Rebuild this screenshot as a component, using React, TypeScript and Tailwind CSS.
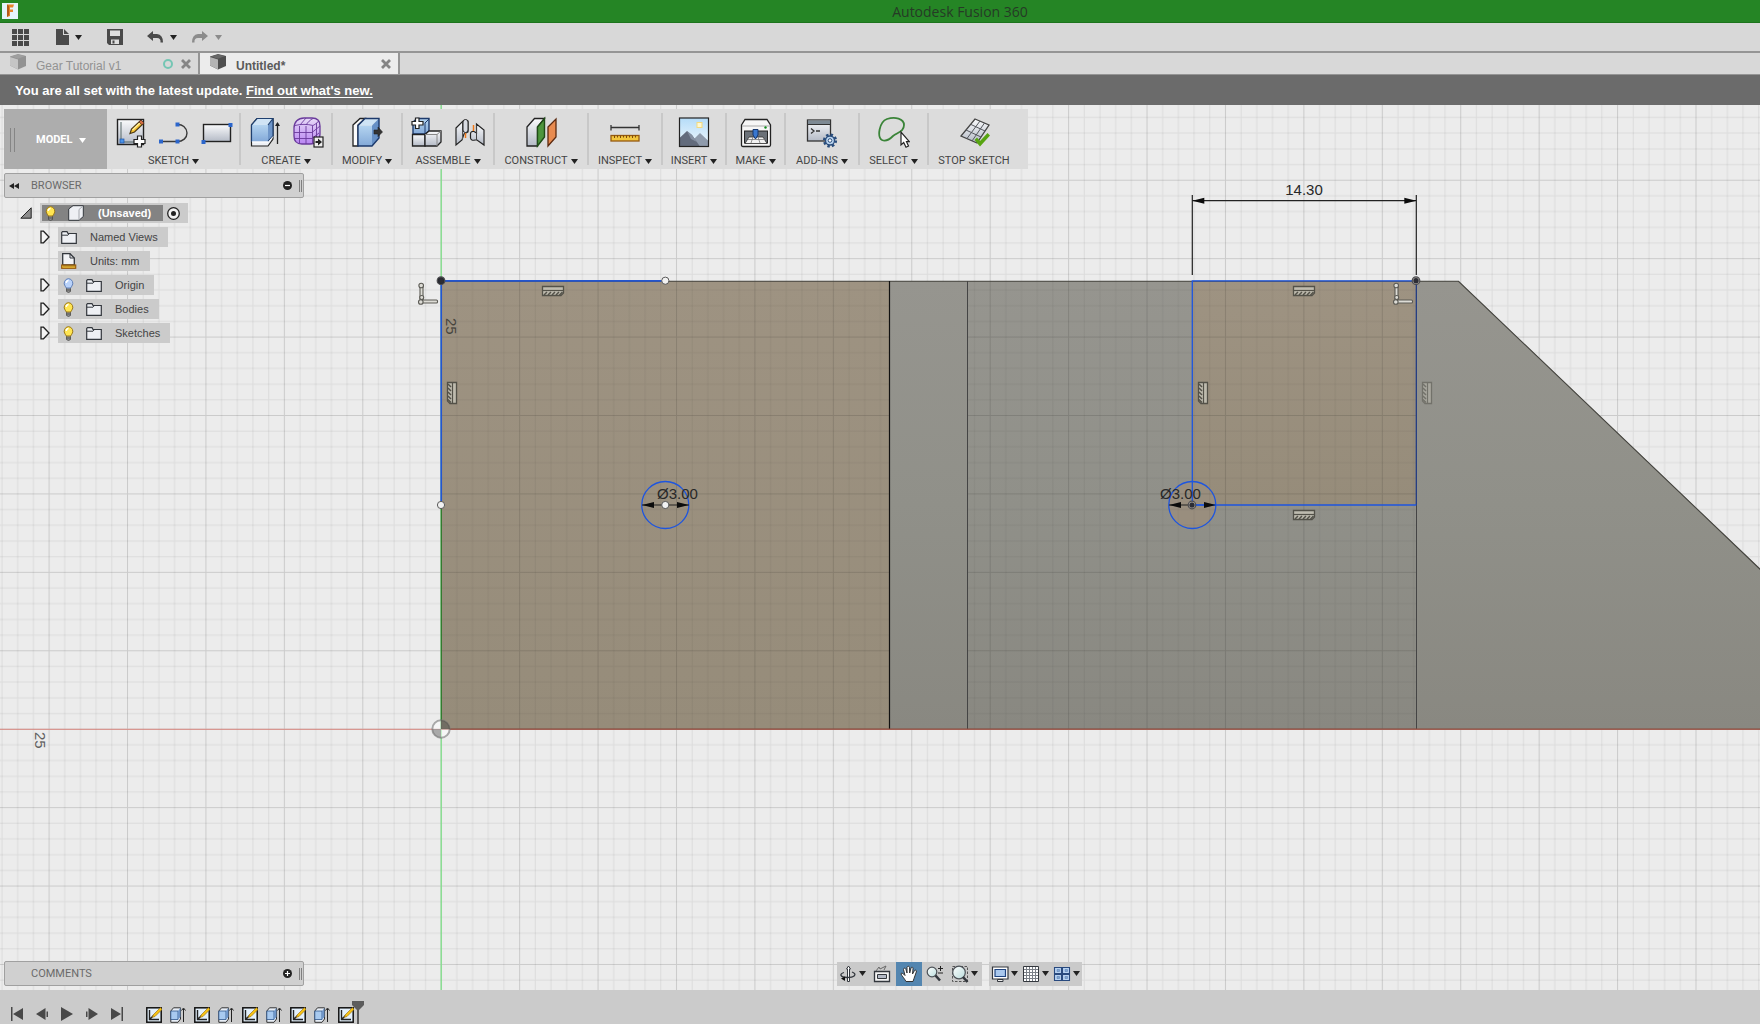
import type { ReactNode } from "react";
import clsx from "clsx";

const OUTLINE = "#33373d";
const BLUE = "#1d55e0";

/* ---------- small shared pieces ---------- */

function Caret({ className }: { className?: string }) {
  return (
    <svg viewBox="0 0 7 5" className={clsx("w-[7px] h-[5px] shrink-0", className)}>
      <path d="M0 0H7L3.5 5Z" fill="currentColor" />
    </svg>
  );
}

function Icon32({ children }: { children: ReactNode }) {
  return <svg viewBox="0 0 32 32" className="w-8 h-8" fill="none">{children}</svg>;
}

function Gradients() {
  return (
    <svg className="absolute w-0 h-0" aria-hidden="true">
      <defs>
        <linearGradient id="steel" x1="0" y1="0" x2="0" y2="1">
          <stop offset="0" stopColor="#fafbfc" />
          <stop offset="1" stopColor="#b4bac6" />
        </linearGradient>
        <linearGradient id="sky" x1="0" y1="0" x2="0" y2="1">
          <stop offset="0" stopColor="#b4d4f0" />
          <stop offset="1" stopColor="#83a9d8" />
        </linearGradient>
        <linearGradient id="violet" x1="0" y1="0" x2="0" y2="1">
          <stop offset="0" stopColor="#e8dcf8" />
          <stop offset="1" stopColor="#b884f2" />
        </linearGradient>
        <linearGradient id="scene" x1="0" y1="0" x2="0" y2="1">
          <stop offset="0" stopColor="#b5dcf8" />
          <stop offset="1" stopColor="#f0f8fd" />
        </linearGradient>
        <linearGradient id="glass" x1="0" y1="0" x2="1" y2="1">
          <stop offset="0" stopColor="#ffffff" />
          <stop offset="1" stopColor="#b9dcdc" />
        </linearGradient>
      </defs>
    </svg>
  );
}

/* ---------- ribbon icons ---------- */

function NewSketchIcon() {
  return (
    <Icon32>
      <rect x="2.5" y="3.5" width="26" height="25" fill="url(#steel)" stroke="#222" strokeWidth="1.4" />
      <path d="M6 6V26H20" stroke="#566" />
      <rect x="5" y="23" width="4" height="4" fill="#4b93e8" stroke="#1d55a8" strokeWidth=".7" />
      <path d="M15 17.5L16.5 13L25.5 4.5L28.5 7.5L19.5 16Z" fill="#f6c22f" stroke="#4c3a17" strokeWidth="1.2" />
      <path d="M17.5 14L26 6" stroke="#fff0a0" strokeWidth="1.4" />
      <path d="M24 6L27 8.8L29 7L26 4Z" fill="#d66f45" stroke="#5a3020" strokeWidth=".8" />
      <path d="M22.5 20H26.5V23.5H30V27.5H26.5V31H22.5V27.5H19V23.5H22.5Z" fill="#fff" stroke="#222" strokeWidth="1.2" />
    </Icon32>
  );
}

function LineIcon() {
  return (
    <Icon32>
      <path d="M3 25.500H19M19 8.500A9 9 0 0 1 29 17C29 22 25 25.500 19 25.500" stroke="#3a3a3a" strokeWidth="1.400" />
      <path d="M1 23.500H5V27.500H1ZM17.500 23.500H21.500V27.500H17.500ZM17.500 6.500H21.500V10.500H17.500Z" fill="#2c66cc" />
    </Icon32>
  );
}

function RectangleIcon() {
  return (
    <Icon32>
      <rect x="2.500" y="8.500" width="27" height="17" fill="url(#steel)" stroke="#222" strokeWidth="1.4" />
      <path d="M0.500 24H4.500V28H0.500ZM27.500 7H31.500V11H27.500Z" fill="#2c66cc" />
    </Icon32>
  );
}

function ExtrudeIcon() {
  return (
    <Icon32>
      <path d="M2.500 9L8 2.500H24V23L19 30H2.500Z" fill="#eef1f6" stroke="#222" strokeWidth="1.200" />
      <path d="M2.500 9V25.500H19V9Z" fill="url(#sky)" />
      <path d="M19 9L24 2.500V20L19 25.500Z" fill="#6f96c9" />
      <path d="M2.500 9L8 2.500H24L19 9Z" fill="#d0e4f5" />
      <path d="M2.500 25.500V9L8 2.500H24V20L19 25.500M19 9L24 2.500" stroke="#1f4070" strokeWidth="1.200" />
      <path d="M3 26H19.500L24 20.500" stroke="#fff" />
      <path d="M28.500 28V7" stroke="#222" strokeWidth="1.300" />
      <path d="M26 10L28.500 6L31 10Z" fill="#222" />
    </Icon32>
  );
}

function FormIcon() {
  return (
    <Icon32>
      <path d="M2 12C2 6 6 2 12 2H20C25 2 28 5 28 10V18C28 24 24 28 18 28H10C5 28 2 25 2 20Z" fill="url(#violet)" stroke="#6a3a9c" strokeWidth="1.300" />
      <path d="M2 16.500H20L28 10M3 22.500H20L27 17M7.500 27.500V10M14 28V10M20.500 27.500V10M3 9.500C8 8 16 8 21 9.500C24 8 26 6 26.500 5M21 2.500C18 4 16 6 14 9M14 2L8 9M24.500 25V7" stroke="#6a3a9c" strokeWidth=".9" />
      <rect x="22" y="21" width="9" height="10" fill="#eee" stroke="#222" strokeWidth="1.200" />
      <path d="M23.500 25H26V22.500L30 26L26 29.500V27H23.500Z" fill="#222" />
    </Icon32>
  );
}

function PressPullIcon() {
  return (
    <Icon32>
      <path d="M2 9L9 2.500H14L7 9V30H2Z" fill="#fbfbfb" stroke="#222" strokeWidth="1.300" />
      <path d="M7 9.500H21V30H7Z" fill="url(#sky)" />
      <path d="M7 9.500L14 2.500H28L21 9.500Z" fill="#cfe4f5" />
      <path d="M21 9.500L28 2.500V22L21 30Z" fill="#6690c6" />
      <path d="M7 9.500L14 2.500H28V22L21 30H7Z" stroke="#1d3a6c" strokeWidth="1.400" />
      <path d="M23 14H27V11L31.500 16L27 20.500V18H23Z" fill="#333" stroke="#222" strokeWidth=".6" />
    </Icon32>
  );
}

function NewComponentIcon() {
  return (
    <Icon32>
      <path d="M2 18V6L6 2.500H18V15L14 18Z" fill="url(#sky)" stroke="#1d3a6c" strokeWidth="1.400" />
      <path d="M14 18V7L18 3" stroke="#1d3a6c" />
      <path d="M1.500 18.500H14V30H1.500Z" fill="url(#steel)" stroke="#222" strokeWidth="1.300" />
      <path d="M14 18.500L18 15H30V26L26 30H14Z" fill="url(#steel)" stroke="#222" strokeWidth="1.300" />
      <path d="M14 18.500H26V30M26 18.500L30 15" stroke="#888" />
      <path d="M4.500 2H8V5.500H12V9H8V12.500H4.500V9H1V5.500H4.500Z" fill="#fff" stroke="#222" strokeWidth="1.200" />
    </Icon32>
  );
}

function JointIcon() {
  return (
    <Icon32>
      <path d="M2 12L9 5H14V16L10 18L8 24L2 29Z" fill="url(#steel)" stroke="#222" strokeWidth="1.200" />
      <path d="M8.500 6V23" stroke="#555" />
      <rect x="9" y="3.500" width="5" height="13" rx="2.500" fill="#d8dbe2" stroke="#222" />
      <path d="M30 29V14L22.500 8V17L20 15.500Q16.500 15 16.500 18V22Q17 25 21 24L23 24Z" fill="url(#steel)" stroke="#222" strokeWidth="1.200" />
      <path d="M22.500 9V24" stroke="#444" />
      <path d="M11.500 17V22M19.500 9V15" stroke="#f07818" strokeWidth="1.500" />
    </Icon32>
  );
}

function PlaneIcon() {
  return (
    <Icon32>
      <path d="M2 11L9.500 2.500H19.500L12.500 11V30H2Z" fill="url(#steel)" stroke="#222" strokeWidth="1.300" />
      <path d="M12.500 11L19.500 2.500V21L12.500 30Z" fill="#4d963d" stroke="#1f4c18" strokeWidth="1.400" />
      <path d="M23 11L31 3V21L23 30Z" fill="#e88b50" stroke="#5c2a10" strokeWidth="1.300" />
    </Icon32>
  );
}

function MeasureIcon() {
  return (
    <Icon32>
      <path d="M2 11.500H30M2 9V14.500M30 9V14.500" stroke="#333" strokeWidth="1.300" />
      <rect x="2" y="19.500" width="28" height="5.500" fill="#f2c63d" stroke="#965a10" strokeWidth="1.300" />
      <path d="M5.500 19.500V22M8.500 19.500V21.500M11.500 19.500V22M14.500 19.500V21.500M17.500 19.500V22M20.500 19.500V21.500M23.500 19.500V22M26.500 19.500V21.500" stroke="#7d4a0c" />
    </Icon32>
  );
}

function ImageIcon() {
  return (
    <Icon32>
      <rect x="1.500" y="2" width="29" height="28.500" fill="url(#scene)" />
      <rect x="19" y="6.500" width="5" height="5" fill="#fff8d0" stroke="#f3da80" />
      <path d="M14 25L22 17L30.500 25V30.500H14Z" fill="#8f9bac" />
      <path d="M1.500 22L9 15L14 19L22 30.500H1.500Z" fill="#626b7c" />
      <path d="M9 15L14 19L19 26L13 23Z" fill="#8590a2" />
      <rect x="1.500" y="2" width="29" height="28.500" stroke="#222" strokeWidth="1.200" />
    </Icon32>
  );
}

function PrinterIcon() {
  return (
    <Icon32>
      <path d="M1.500 9L5 3.500H27L30.500 9V29Q30.500 30.500 29 30.500H3Q1.500 30.500 1.500 29Z" fill="#f6f6f6" stroke="#222" strokeWidth="1.300" />
      <path d="M2 10H30" stroke="#aaa" />
      <rect x="4.500" y="15" width="23" height="12" fill="#6b7178" stroke="#222" />
      <path d="M9 21H23L27 27.500H5Z" fill="#f2f2f2" stroke="#333" strokeWidth=".8" />
      <path d="M8 23.500H25M13 21L11 27M18 21L20 27" stroke="#777" strokeWidth=".8" />
      <path d="M13 13.500H18V19L15.500 23L13 19Z" fill="#3978d0" stroke="#16366e" />
      <circle cx="25.500" cy="11.500" r="1.200" fill="#118a1c" />
    </Icon32>
  );
}

function ScriptIcon() {
  return (
    <Icon32>
      <rect x="1.500" y="4" width="23" height="21" fill="url(#steel)" stroke="#333" strokeWidth="1.300" />
      <rect x="2" y="4.500" width="22" height="3.500" fill="#7e8a94" />
      <path d="M2 8.500H24" stroke="#333" />
      <path d="M5 12.500L8 15L5 17.500M10 15H14" stroke="#333" strokeWidth="1.300" />
      <circle cx="24" cy="24.500" r="5.500" stroke="#294d7c" strokeWidth="3.200" strokeDasharray="2.300 2" />
      <circle cx="24" cy="24.500" r="4.500" fill="#b9d3ee" stroke="#294d7c" strokeWidth="1.300" />
      <circle cx="24" cy="24.500" r="1.800" fill="#fff" stroke="#294d7c" />
    </Icon32>
  );
}

function SelectIcon() {
  return (
    <Icon32>
      <path d="M9 3C17 .5 26 2.500 26 9C26 15 21 16 15 20C11 24 8 26 4 24C-1 21 1 6 9 3Z" stroke="#3a8438" strokeWidth="1.800" />
      <path d="M23 16V29L25.700 26.500L28 31.200L30.500 30L28.500 25.700H31.300Z" fill="#fff" stroke="#222" strokeWidth="1.200" />
    </Icon32>
  );
}

function StopSketchIcon() {
  return (
    <Icon32>
      <path d="M17 3L31 9L19 27L3 20Z" fill="url(#steel)" stroke="#444" strokeWidth="1.300" />
      <path d="M22 5L9 22.500M26.500 7L14 25M13 8.500L27 15M8 14L23 21" stroke="#55585e" />
      <path d="M16.500 24L19 21.500L22 25L29.500 17L32 19.500L22 30.500Z" fill="#57a411" />
    </Icon32>
  );
}

const TOOL_GROUPS = [
  { label: "SKETCH", width: "w-[133px]", menu: true, icons: [NewSketchIcon, LineIcon, RectangleIcon] },
  { label: "CREATE", width: "w-[92px]", menu: true, icons: [ExtrudeIcon, FormIcon] },
  { label: "MODIFY", width: "w-[70px]", menu: true, icons: [PressPullIcon] },
  { label: "ASSEMBLE", width: "w-[92px]", menu: true, icons: [NewComponentIcon, JointIcon] },
  { label: "CONSTRUCT", width: "w-[94px]", menu: true, icons: [PlaneIcon] },
  { label: "INSPECT", width: "w-[74px]", menu: true, icons: [MeasureIcon] },
  { label: "INSERT", width: "w-16", menu: true, icons: [ImageIcon] },
  { label: "MAKE", width: "w-[59px]", menu: true, icons: [PrinterIcon] },
  { label: "ADD-INS", width: "w-[74px]", menu: true, icons: [ScriptIcon] },
  { label: "SELECT", width: "w-[69px]", menu: true, icons: [SelectIcon] },
  { label: "STOP SKETCH", width: "w-[100px] pr-2", menu: false, icons: [StopSketchIcon] },
];

function Ribbon() {
  return (
    <div className="flex h-[60px] w-fit bg-[#dcdcdc] font-['Roboto',sans-serif] text-[11px] leading-4 text-[#444444]">
      <button className="flex items-center w-[103px] bg-[#adadad] pt-0.5 text-white font-bold">
        <span className="ml-1.5 mr-[21px] w-[5px] h-6 border-x border-[#858585]" />
        MODEL
        <Caret className="ml-1.5 w-1.5 h-1" />
      </button>
      {TOOL_GROUPS.map((group, i) => (
        <div key={group.label} className={clsx("relative flex flex-col items-center pt-[7px]", group.width)}>
          <div className="flex gap-[11px]">
            {group.icons.map((ToolIcon, n) => (
              <button key={n} aria-label={`${group.label} ${n + 1}`}>
                <ToolIcon />
              </button>
            ))}
          </div>
          <button className="flex items-center gap-[3px] mt-[5px]">
            {group.label}
            {group.menu && <Caret className="w-1.5 h-1 text-[#222]" />}
          </button>
          {i < TOOL_GROUPS.length - 1 && <span className="absolute -right-px top-1 h-[52px] w-0.5 bg-[#c8c8c8]" />}
        </div>
      ))}
    </div>
  );
}

/* ---------- top bars ---------- */

function TitleBar() {
  return (
    <header className="relative flex items-center justify-center h-[23px] shrink-0 bg-[#258525] border-b border-[#1c741c] pl-40">
      <svg viewBox="0 0 16 16" className="absolute left-0.5 top-[3px] w-4 h-4">
        <rect width="16" height="16" fill="#e6f3fb" />
        <path d="M5 1.500H12L11 4.500H8V6.500H11V9H8V13L5 14Z" fill="#e8842a" />
        <path d="M5 1.500L7 3V12L5 14Z" fill="#b5591a" />
      </svg>
      <h1 className="pt-px font-['Open_Sans',sans-serif] text-[14px] leading-5 text-[#263a26]">Autodesk Fusion 360</h1>
    </header>
  );
}

function QuickAccess() {
  return (
    <nav className="flex items-center h-[30px] shrink-0 bg-[#d8d8d8] border-b-2 border-[#959595] pl-3 text-[#4a4a4a]">
      <button aria-label="Data panel">
        <svg viewBox="0 0 17 17" className="w-[17px] h-[17px]" fill="currentColor">
          <path d="M0 0H5V5H0ZM6 0H11V5H6ZM12 0H17V5H12ZM0 6H5V11H0ZM6 6H11V11H6ZM12 6H17V11H12ZM0 12H5V17H0ZM6 12H11V17H6ZM12 12H17V17H12Z" />
        </svg>
      </button>
      <button aria-label="File" className="flex items-center gap-1.5 ml-[27px]">
        <svg viewBox="0 0 13 16" className="w-[13px] h-4" fill="currentColor">
          <path d="M0 0H7V6H13V16H0ZM8 0L13 5H8Z" />
        </svg>
        <Caret className="text-[#222]" />
      </button>
      <button aria-label="Save" className="ml-[25px]">
        <svg viewBox="0 0 16 16" className="w-4 h-4">
          <path d="M0 0H16V16H2L0 14Z" fill="currentColor" />
          <path d="M3 1.500H13V7H3ZM4 10.500H12V15H4Z" fill="#dedede" />
          <rect x="5.500" y="11.500" width="2" height="3" fill="currentColor" />
        </svg>
      </button>
      <button aria-label="Undo" className="flex items-center gap-[7px] ml-6">
        <svg viewBox="0 0 16 12" className="w-4 h-3" fill="currentColor">
          <path d="M0 5L6 0V3H10Q16 3.500 16 11.500H13.500Q14 7 10 7H6V10Z" />
        </svg>
        <Caret className="text-[#222]" />
      </button>
      <button aria-label="Redo" className="flex items-center gap-[7px] ml-[15px] text-[#8c8c8c]">
        <svg viewBox="0 0 16 12" className="w-4 h-3" fill="currentColor">
          <path d="M16 5L10 0V3H6Q0 3.500 0 11.500H2.500Q2 7 6 7H10V10Z" />
        </svg>
        <Caret />
      </button>
    </nav>
  );
}

function DocumentTab({ title, active }: { title: string; active?: boolean }) {
  return (
    <div
      className={clsx(
        "flex items-center w-[200px] border-r-2 border-[#959595] pl-2.5 pr-[7px]",
        active ? "bg-[#ececec] text-[#5a5a5a] font-bold" : "text-[#929292]"
      )}
    >
      <svg viewBox="0 0 16 16" className={clsx("w-4 h-4 -mt-1 shrink-0", !active && "opacity-50")}>
        <path d="M0 2.500L8 0L16 2V12L8 15.500L0 11.500Z" fill="#4f4f4f" />
        <path d="M0 3L8 5.500V15.500L0 11.500Z" fill="#b4b4b4" />
        <path d="M1 2.500L8 .5L15 2L8 4.800Z" fill="#686868" />
      </svg>
      <button className="ml-2.5 mt-1 text-xs leading-4">{title}</button>
      <div className="flex items-center gap-2 ml-auto">
        {!active && <span className="w-2.5 h-2.5 rounded-full border-2 border-[#75c6b4]" />}
        <button aria-label={`Close ${title}`}>
          <svg viewBox="0 0 10 10" className="w-2.5 h-2.5" stroke="#858585" strokeWidth="2.800">
            <path d="M1 1L9 9M9 1L1 9" />
          </svg>
        </button>
      </div>
    </div>
  );
}

/* ---------- browser tree ---------- */

function Bulb({ off }: { off?: boolean }) {
  return (
    <svg viewBox="0 0 11 15" className="w-[11px] h-[15px] shrink-0">
      <path d="M3.500 9.500H7.500V13.500Q5.500 15.500 3.500 13.500Z" fill="#8c8c8c" stroke="#444" strokeWidth=".7" />
      <path d="M5.500 .6A4.700 4.700 0 0 1 8.800 8.200L7.600 10H3.400L2.200 8.200A4.700 4.700 0 0 1 5.500 .6Z" fill={off ? "#b9d2fa" : "#ffe552"} stroke={off ? "#6080b8" : "#9c7818"} strokeWidth="1" />
      <path d="M3.300 5A2.300 2.300 0 0 1 5.500 2.500" stroke="#fff" strokeWidth="1.500" fill="none" />
      <path d="M3.500 12H7.500" stroke="#444" strokeWidth=".7" />
    </svg>
  );
}

function Folder() {
  return (
    <svg viewBox="0 0 16 13" className="w-4 h-[13px] shrink-0">
      <path d="M.7 12.300V1.500L1.500 .7H6L7 2.500H15.300V12.300Z" fill="#eef0f4" stroke={OUTLINE} strokeWidth="1.200" />
      <path d="M1 4.200H7L8 3" fill="none" stroke={OUTLINE} />
    </svg>
  );
}

function UnitsIcon() {
  return (
    <svg viewBox="0 0 16 16" className="w-4 h-4 shrink-0">
      <path d="M1.700 12V.7H9L13.300 5V12Z" fill="#f2f3f6" stroke={OUTLINE} strokeWidth="1.300" />
      <path d="M9 .7V5H13.300" fill="none" stroke={OUTLINE} />
      <rect x=".7" y="12" width="14" height="3.300" fill="#f2c63d" stroke="#965a10" strokeWidth="1.200" />
      <path d="M3 12V14M5 12V14M7 12V14M9 12V14M11 12V14M13 12V14" stroke="#7d4a0c" strokeWidth=".7" />
    </svg>
  );
}

const TREE_ROWS = [
  { label: "Named Views", bulb: null, units: false },
  { label: "Units: mm", bulb: null, units: true },
  { label: "Origin", bulb: "off", units: false },
  { label: "Bodies", bulb: "on", units: false },
  { label: "Sketches", bulb: "on", units: false },
];

function PanelHeader({ title, open }: { title: string; open?: boolean }) {
  return (
    <div className="flex items-center w-[300px] h-[25px] shrink-0 bg-[#d0d0d0] border border-[#a0a0a0] rounded-xs px-1 font-['Roboto',sans-serif] text-[11px] text-[#6a6a6a]">
      <span className="w-[22px]">
        {open && (
          <svg viewBox="0 0 10 6" className="w-2.5 h-1.5" fill="#222">
            <path d="M0 3L5 0V6ZM5 3L10 0V6Z" />
          </svg>
        )}
      </span>
      <span className="pt-0.5">{title}</span>
      <button aria-label={`Toggle ${title}`} className="ml-auto">
        <svg viewBox="0 0 9 9" className="w-[9px] h-[9px]" stroke="#fff" strokeWidth="1.200">
          <circle cx="4.500" cy="4.500" r="4.500" fill="#222" stroke="none" />
          <path d={open ? "M2 4.500H7" : "M2 4.500H7M4.500 2V7"} />
        </svg>
      </button>
      <span className="ml-[7px] -mr-[3px] w-[3px] h-3 border-x border-[#808080]" />
    </div>
  );
}

function BrowserTree() {
  return (
    <div className="mt-[5px] w-fit flex flex-col gap-1 font-['Liberation_Sans',sans-serif] text-[11px] text-[#444444]">
      <div className="flex items-center pl-4">
        <svg viewBox="0 0 12 12" className="w-3 h-3">
          <path d="M.8 11.200H11.200V.8Z" fill="#8c8c8c" stroke="#222" />
        </svg>
        <div className="flex items-center h-5 ml-2 bg-[#cbcbcb] pl-0.5 pr-2">
          <button className="flex items-center h-4 w-[121px] bg-[#838383] pl-[3px] text-white font-bold">
            <Bulb />
            <svg viewBox="0 0 16 16" className="w-4 h-4 ml-3">
              <path d="M.7 4L5 .7H15.300V11.500L11 15.300H.7Z" fill="#eef0f4" stroke={OUTLINE} />
              <path d="M11 15V4.500L15 1" fill="none" stroke="#a5a8ae" />
            </svg>
            <span className="ml-3.5">(Unsaved)</span>
          </button>
          <svg viewBox="0 0 13 13" className="w-[13px] h-[13px] ml-1">
            <circle cx="6.500" cy="6.500" r="5.800" fill="#f3f3f3" stroke="#222" strokeWidth="1.300" />
            <circle cx="6.500" cy="6.500" r="2.500" fill="#222" />
          </svg>
        </div>
      </div>
      {TREE_ROWS.map((row) => (
        <div key={row.label} className="flex items-center pl-9">
          <svg viewBox="0 0 10 14" className={clsx("w-2.5 h-3.5", row.units && "invisible")}>
            <path d="M1 1.200V12.800H3.500L9 7L3.500 1.200Z" fill="#f4f4f4" stroke="#222" strokeWidth="1.300" />
          </svg>
          <button className="flex items-center h-5 ml-2 bg-[#cbcbcb] pl-[3px] pr-2.5">
            {row.bulb && (
              <span className="pl-0.5 pr-3">
                <Bulb off={row.bulb === "off"} />
              </span>
            )}
            {row.units ? <UnitsIcon /> : <Folder />}
            <span className="ml-[13px]">{row.label}</span>
          </button>
        </div>
      ))}
    </div>
  );
}

/* ---------- modelling canvas: coordinates are relative to the sketch origin ---------- */

const CELL = 15.685;

function Arrow({ x, y, left }: { x: number; y: number; left?: boolean }) {
  const back = left ? 12 : -12;
  return <path d={`M${x} ${y}l${back} -3v6z`} fill="#0c0c0c" />;
}

function FixGlyph({ x, y, vertical, faded }: { x: number; y: number; vertical?: boolean; faded?: boolean }) {
  return (
    <g transform={`translate(${x} ${y}) rotate(${vertical ? 90 : 0})`} opacity={faded ? 0.45 : 0.9}>
      <path d="M-10.500 -4.500H10.500V2L8 4.500H-10.500Z" fill="#c3c0b4" stroke="#4c4b43" strokeWidth="1.300" />
      <path d="M-10 -.5H10" stroke="#4c4b43" strokeWidth="1.200" />
      <path d="M-9 4l3 -3M-5 4l3 -3M-1 4l3 -3M3 4l3 -3M6.500 4l3 -3" stroke="#4c4b43" strokeWidth="1.500" />
    </g>
  );
}

function PerpGlyph({ x, y }: { x: number; y: number }) {
  return (
    <g transform={`translate(${x} ${y})`} stroke="#5c5b55" fill="#dddcd6" strokeWidth="1.100">
      <rect x="2" y="3" width="3" height="14" />
      <rect x="2" y="17" width="17.500" height="3" rx="1" />
      <circle cx="3.200" cy="2.500" r="2.300" />
      <circle cx="3.700" cy="14.500" r="2" />
      <circle cx="2.800" cy="19" r="2.300" />
    </g>
  );
}

function OpenPoint({ x, y }: { x: number; y: number }) {
  return <circle cx={x} cy={y} r="3.600" fill="#f2f2f2" stroke="#5a5a5a" />;
}

function SolidPoint({ x, y, ring }: { x: number; y: number; ring?: boolean }) {
  return (
    <g>
      <circle cx={x} cy={y} r="3.800" fill={ring ? "#a5a098" : "#26282c"} stroke="#4c4c50" strokeWidth="1.200" />
      <circle cx={x} cy={y} r="2.600" fill="#2b2c34" />
    </g>
  );
}

function GridLines({ id, major, minor }: { id: string; major: number; minor: number }) {
  return (
    <pattern id={id} x="-0.3" y="-0.3" width={CELL * 5} height={CELL * 5} patternUnits="userSpaceOnUse">
      {[0, 1, 2, 3, 4].map((n) => (
        <path
          key={n}
          d={`M${n * CELL + 0.5} 0V${CELL * 5}M0 ${n * CELL + 0.5}H${CELL * 5}`}
          stroke="#000"
          strokeOpacity={n === 0 ? major : minor}
        />
      ))}
    </pattern>
  );
}

function Scene() {
  return (
    <svg className="absolute inset-0 w-full h-full bg-[#ececec] font-['Liberation_Sans',sans-serif]">
      <defs>
        <GridLines id="grid" major={0.14} minor={0.065} />
        <GridLines id="bodyGrid" major={0.12} minor={0.05} />
        <linearGradient id="body" x1="0" y1="0" x2="0" y2="1">
          <stop offset="0" stopColor="#96958f" />
          <stop offset=".5" stopColor="#909089" />
          <stop offset="1" stopColor="#898881" />
        </linearGradient>
        <linearGradient id="profile" x1="0" y1="0" x2="0" y2="1">
          <stop offset="0" stopColor="#9e9382" />
          <stop offset="1" stopColor="#968c7a" />
        </linearGradient>
      </defs>
      <g transform="translate(441 624)">
        <rect x="-441" y="-624" width="4000" height="3000" fill="url(#grid)" />
        <path d="M-441 .3H3000" stroke="#d98880" />
        <path d="M.2 -624V2000" stroke="#84de8d" strokeWidth="1.400" />

        {/* solid body and highlighted profiles */}
        <path d="M0 -448H1017.500L1487 0H0Z" fill="url(#body)" />
        <rect x="0" y="-448" width="449" height="448" fill="url(#profile)" />
        <rect x="751" y="-448" width="224" height="224" fill="url(#profile)" />
        <circle cx="751" cy="-224" r="23.500" fill="#998e7e" />
        <rect x="0" y="-448" width="449" height="448" fill="url(#bodyGrid)" />
        <rect x="527" y="-448" width="448" height="448" fill="url(#bodyGrid)" />
        <path d="M0 -447.700H1017.500L1487 0.500" fill="none" stroke="#45443f" strokeWidth="1.100" />
        <path d="M448.500 -448V0" stroke="#111" strokeWidth="1.200" />
        <path d="M526.500 -448V0M975.500 -448V0" stroke="#444" />
        <path d="M0 .1H1487" stroke="#8c4a3c" strokeWidth="1.200" />
        <path d="M.3 -224V0" stroke="#2f7a2c" strokeWidth="1.300" />

        {/* sketch curves */}
        <g fill="none" stroke={BLUE} strokeWidth="1.300">
          <path d="M.2 -224V-448.200H224" stroke="#2355d0" strokeWidth="1.700" />
          <path d="M751.300 -224V-448.200H975.300" />
          <path d="M975.300 -448V-224" stroke="#253f86" />
          <path d="M975.300 -224H751.300" />
          <circle cx="224.300" cy="-224" r="23.500" />
          <circle cx="751.300" cy="-224" r="23.500" />
        </g>

        {/* dimensions */}
        <g stroke="#222" strokeWidth="1.200">
          <path d="M751.300 -534V-454M975.300 -534V-454M751.300 -528.300H975.300" />
          <path d="M201 -224H248M728 -224H751" />
          <path d="M751 -224H775" stroke={BLUE} />
        </g>
        <Arrow x={751.300} y={-528.300} left />
        <Arrow x={975.300} y={-528.300} />
        <Arrow x={201} y={-224} left />
        <Arrow x={248} y={-224} />
        <Arrow x={728} y={-224} left />
        <Arrow x={775} y={-224} />
        <g fontSize="15" fill="#282828">
          <text x="863" y="-534" textAnchor="middle">14.30</text>
          <text x="216" y="-230">Ø3.00</text>
          <text x="719" y="-230">Ø3.00</text>
          <text transform="translate(5 -411) rotate(90)" fill="#47453e">25</text>
          <text transform="translate(-406 3) rotate(90)" fill="#606060">25</text>
        </g>

        <OpenPoint x={224.300} y={-448.300} />
        <OpenPoint x={0} y={-224} />
        <OpenPoint x={224.300} y={-224} />
        <SolidPoint x={0} y={-448.300} />
        <SolidPoint x={751} y={-224} ring />
        <SolidPoint x={975} y={-448.300} ring />

        <FixGlyph x={112} y={-438} />
        <FixGlyph x={863} y={-438} />
        <FixGlyph x={863} y={-214} />
        <FixGlyph x={11} y={-336} vertical />
        <FixGlyph x={762} y={-336} vertical />
        <FixGlyph x={986} y={-336} vertical faded />
        <PerpGlyph x={-23} y={-446} />
        <PerpGlyph x={952} y={-446} />

        {/* origin marker */}
        <circle cx="0" cy="0" r="8.700" fill="#fff" fillOpacity=".5" stroke="#777" strokeOpacity=".6" strokeWidth="2" />
        <path d="M0 0V-9A9 9 0 0 1 9 0Z" fill="#544f45" fillOpacity=".75" />
        <path d="M0 0V9A9 9 0 0 1 -9 0Z" fill="#777" fillOpacity=".6" />
      </g>
    </svg>
  );
}

/* ---------- bottom bars ---------- */

function NavButton({ label, width, caret, active, children }: { label: string; width: string; caret?: boolean; active?: boolean; children: ReactNode }) {
  return (
    <button aria-label={label} className={clsx("flex items-center justify-center h-6 gap-0.5", width, active && "bg-[#5486b0]")}>
      <svg viewBox="0 0 18 18" className="w-[18px] h-[18px]" fill="none">{children}</svg>
      {caret && <Caret className="w-1.5 h-1 text-[#222]" />}
    </button>
  );
}

function ViewControls() {
  return (
    <div className="flex gap-[7px]">
      <div className="flex bg-[#cacaca]">
        <NavButton label="Orbit" width="w-8" caret>
          <path d="M9.500 1L11.500 4H10.500V16.500H8.500V4H7.500Z" fill="#fff" stroke={OUTLINE} />
          <path d="M5 7.500C0 9 1 12 8 12.500C15 12.500 19 9.500 13 7" stroke={OUTLINE} strokeWidth="1.300" />
          <path d="M6 11.500L2 13.500L6 16Z" fill="#111" />
        </NavButton>
        <NavButton label="Look at" width="w-[27px]">
          <path d="M1.500 6.500H16.500V16.500H1.500Z" fill="#f4f4f4" stroke={OUTLINE} strokeWidth="1.300" />
          <path d="M4.500 9.500H13.500V13.500H4.500Z" fill="#b4bac6" stroke={OUTLINE} />
          <path d="M3 6L6 2L7 4L13 1L11 5" stroke="#666" />
        </NavButton>
        <NavButton label="Pan" width="w-[26px]" active>
          <path d="M6 16.500C4 13 2 11 1 9C1 7.500 3 8 5 10.500L3.500 4.500C3.500 2.500 5.500 3 6 4.500L7 8L7 2.500C7.500 .7 9.300 1 9.500 2.500L9.700 8L11 3C11.500 1.500 13.300 2 13 4L12.500 9L14.500 5.500C15.500 4.500 17 5.500 16.300 7L14 13.500L13 16.500Z" fill="#fff" stroke="#333" />
        </NavButton>
        <NavButton label="Zoom" width="w-[26px]">
          <circle cx="6" cy="7" r="4.800" fill="url(#glass)" stroke="#4c5157" strokeWidth="1.200" />
          <path d="M9.500 10.500L14 15.500" stroke={OUTLINE} strokeWidth="2.600" />
          <path d="M14.500 1V6M12 3.500H17M12 8H17" stroke="#222" />
        </NavButton>
        <NavButton label="Fit" width="w-[34px]" caret>
          <path d="M1.500 1.500H16.500V16.500H1.500Z" stroke="#555" strokeDasharray="2.500 1.500" />
          <circle cx="8" cy="7.500" r="6.300" fill="url(#glass)" stroke="#4c5157" strokeWidth="1.200" />
          <path d="M12 12L16.500 17" stroke={OUTLINE} strokeWidth="2.600" />
        </NavButton>
      </div>
      <div className="flex bg-[#cacaca]">
        <NavButton label="Display settings" width="w-[31px]" caret>
          <path d="M1.500 2H17V14H1.500Z" fill="#fff" stroke={OUTLINE} strokeWidth="1.200" />
          <path d="M4 4.500H14.500V11.500H4Z" fill="#a9c8ee" stroke="#1f4480" strokeWidth="1.200" />
          <path d="M6.500 14.500H12V16.500H6.500Z" fill="#eee" stroke={OUTLINE} />
        </NavButton>
        <NavButton label="Grid and snaps" width="w-[31px]" caret>
          <path d="M1.500 1.500H16.500V16.500H1.500Z" fill="#fff" />
          <path d="M4.500 1.500V16.500M7.500 1.500V16.500M10.500 1.500V16.500M13.500 1.500V16.500M1.500 4.500H16.500M1.500 7.500H16.500M1.500 10.500H16.500M1.500 13.500H16.500" stroke="#7b8088" />
          <path d="M1.500 1.500H16.500V16.500H1.500Z" stroke={OUTLINE} />
        </NavButton>
        <NavButton label="Viewports" width="w-[31px]" caret>
          <path d="M1.500 2.500H8.500V8.500H1.500ZM9.500 2.500H16.500V8.500H9.500ZM1.500 9.500H8.500V15.500H1.500ZM9.500 9.500H16.500V15.500H9.500Z" fill="#b7d2f2" stroke="#28497e" strokeWidth="1.100" />
          <path d="M4 4.500H6.500V6.500H4ZM12 4.500H14.500V6.500H12ZM4 11.500H6.500V13.500H4ZM12 11.500H14.500V13.500H12Z" fill="#7fa5d6" stroke="#5578a8" strokeWidth=".5" />
        </NavButton>
      </div>
    </div>
  );
}

const PLAYBACK = [
  { label: "Go to start", d: "M0 0H1.500V14H0ZM12 1V13L2 7Z" },
  { label: "Step back", d: "M0 7L9.500 1V13ZM10.500 4.500H12V10H10.500Z" },
  { label: "Play", d: "M0 0L12 7L0 14Z" },
  { label: "Step forward", d: "M0 4.500H1.500V10H0ZM2.500 1V13L12 7Z" },
  { label: "Go to end", d: "M0 1V13L10 7ZM10.500 0H12V14H10.500Z" },
];

const FEATURES = ["sketch", "extrude", "sketch", "extrude", "sketch", "extrude", "sketch", "extrude", "sketch"];

function Timeline() {
  return (
    <footer className="flex items-end h-[34px] shrink-0 bg-[#cbcbcb] pl-[11px]">
      <div className="flex gap-[13px] pb-[3px]">
        {PLAYBACK.map((p) => (
          <button key={p.label} aria-label={p.label}>
            <svg viewBox="0 0 12 14" className="w-3 h-3.5" fill="#484848">
              <path d={p.d} />
            </svg>
          </button>
        ))}
      </div>
      <div className="flex gap-2 ml-[23px] pb-px">
        {FEATURES.map((kind, i) => (
          <button key={i} aria-label={kind}>
            {kind === "sketch" ? (
              <svg viewBox="0 0 16 16" className="w-4 h-4" fill="none">
                <rect x=".8" y=".8" width="14.400" height="14.400" fill="#e3f0fb" stroke="#111" strokeWidth="1.500" />
                <path d="M3.500 3V12.500H13M3.500 12.500L8 8" stroke="#222" strokeWidth="1.400" />
                <path d="M6 10.500L7.500 7.500L14.500 .5L16 2.500L9 9.500Z" fill="#f8c313" stroke="#8c6410" strokeWidth=".6" />
              </svg>
            ) : (
              <svg viewBox="0 0 16 16" className="w-4 h-4" fill="none">
                <path d="M.8 4L3.500 .8H10.500V12L8 15.300H.8Z" fill="#e8eef6" stroke="#333" />
                <path d="M.8 4H8V12.500H.8Z" fill="#a8caf0" stroke="#2d558c" strokeWidth=".8" />
                <path d="M8 4L10.500 .8V10L8 12.500Z" fill="#6f96c9" />
                <path d="M13.500 15V2M11.500 3.500L13.500 1L15.500 3.500" stroke="#222" />
              </svg>
            )}
          </button>
        ))}
      </div>
      <svg viewBox="0 0 12 23" className="w-3 h-[23px] -ml-0.5 relative" fill="#5c5c5c">
        <path d="M0 0H12V4L7 9V23H5V9L0 4Z" />
      </svg>
    </footer>
  );
}

export default function App() {
  return (
    <div className="flex flex-col h-screen min-h-[600px] overflow-hidden bg-[#d8d8d8] font-['Liberation_Sans',sans-serif]">
      <Gradients />
      <TitleBar />
      <QuickAccess />
      <div className="flex h-[22px] shrink-0 border-b border-[#959595]">
        <DocumentTab title="Gear Tutorial v1" />
        <DocumentTab title="Untitled*" active />
      </div>
      <div className="flex items-center h-[30px] shrink-0 bg-[#6b6b6b] px-[15px] pt-0.5 text-[13px] font-bold text-white">
        <p>
          You are all set with the latest update.{" "}
          <a href="#whats-new" className="underline underline-offset-2">Find out what's new.</a>
        </p>
      </div>

      <main className="relative flex-1 min-h-0">
        <Scene />
        <div className="relative flex flex-col h-full p-1">
          <Ribbon />
          <div className="mt-1">
            <PanelHeader title="BROWSER" open />
          </div>
          <BrowserTree />
          <div className="flex items-center mt-auto">
            <PanelHeader title="COMMENTS" />
            <div className="grow-[15]" />
            <ViewControls />
            <div className="grow-[19]" />
          </div>
        </div>
      </main>

      <Timeline />
    </div>
  );
}
